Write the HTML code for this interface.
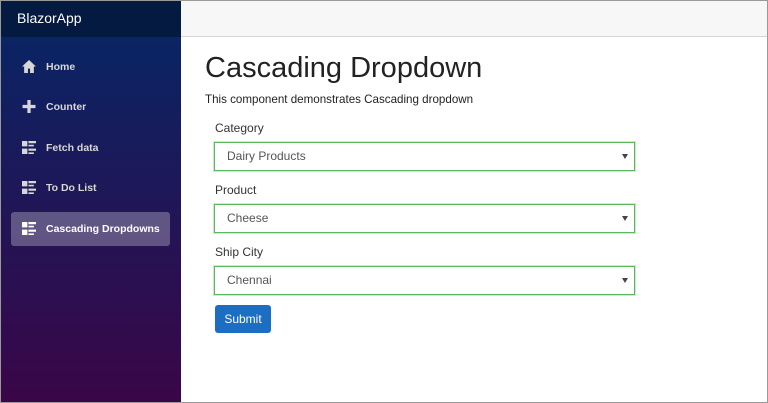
<!DOCTYPE html>
<html><head><style>
*{box-sizing:border-box;margin:0;padding:0}
body{width:768px;height:403px;overflow:hidden;font-family:"Liberation Sans",sans-serif;background:#fff;position:relative}
.frame{position:absolute;inset:0;border:1px solid #999;z-index:10;pointer-events:none}
.side{position:absolute;left:0;top:0;width:181px;height:403px;background:linear-gradient(180deg,#052767 0%,#3a0647 100%)}
.brand{height:37px;background:#041a40;color:#fff;font-size:14px;line-height:36px;padding-left:17px}
.nav{position:absolute;left:11px;width:159px;height:34px;color:#d7d7d7;font-size:10.5px;font-weight:bold;line-height:34px;padding-left:35px;border-radius:3px}
.nav.active{background:rgba(255,255,255,0.28);color:#fff}
.ic{position:absolute;left:11px;top:10px;width:14px;height:13px}
.top{position:absolute;left:181px;top:0;right:0;height:37px;background:#f7f7f7;border-bottom:1px solid #d6d5d5}
h1{position:absolute;left:205px;top:52px;font-size:29px;font-weight:normal;color:#222}
.sub{position:absolute;left:205px;top:93px;font-size:11.6px;color:#222}
.lbl{position:absolute;left:215px;font-size:12px;color:#333}
.sel{position:absolute;left:214px;width:421px;height:29px;border:1px solid #5cb85c;box-shadow:0 0 0 1px rgba(92,184,92,.3);font-size:12px;color:#555;line-height:27px;padding-left:12px}
.sel:after{content:"";position:absolute;right:6px;top:11px;border-left:3px solid transparent;border-right:3px solid transparent;border-top:5px solid #444}
.btn{position:absolute;left:215px;top:305px;width:56px;height:28px;background:#1b6ec2;border-radius:3px;color:#fff;font-size:12px;line-height:28px;text-align:center}
</style></head><body>
<div class="side">
<div class="brand">BlazorApp</div>
<div class="nav" style="top:50px"><svg class="ic" viewBox="0 0 13 12"><path d="M6.5 0L0 6h2v6h3.5V8h2v4H11V6h2z" fill="#d7d7d7"/></svg>Home</div>
<div class="nav" style="top:90px"><svg class="ic" viewBox="0 0 13 12"><path d="M5 0h3v4.5h4.5v3H8V12H5V7.5H.5v-3H5z" fill="#d7d7d7"/></svg>Counter</div>
<div class="nav" style="top:131px"><svg class="ic" viewBox="0 0 13 12"><path d="M0 0h5v5H0zM0 7h5v5H0zM6 0h7v2H6zM6 3.5h5v1.5H6zM6 7h7v2H6zM6 10.5h5V12H6z" fill="#d7d7d7"/></svg>Fetch data</div>
<div class="nav" style="top:171px"><svg class="ic" viewBox="0 0 13 12"><path d="M0 0h5v5H0zM0 7h5v5H0zM6 0h7v2H6zM6 3.5h5v1.5H6zM6 7h7v2H6zM6 10.5h5V12H6z" fill="#d7d7d7"/></svg>To Do List</div>
<div class="nav active" style="top:212px"><svg class="ic" viewBox="0 0 13 12"><path d="M0 0h5v5H0zM0 7h5v5H0zM6 0h7v2H6zM6 3.5h5v1.5H6zM6 7h7v2H6zM6 10.5h5V12H6z" fill="#fff"/></svg>Cascading Dropdowns</div>
</div>
<div class="top"></div>
<h1>Cascading Dropdown</h1>
<div class="sub">This component demonstrates Cascading dropdown</div>
<div class="lbl" style="top:121px">Category</div>
<div class="sel" style="top:142px">Dairy Products</div>
<div class="lbl" style="top:183px">Product</div>
<div class="sel" style="top:204px">Cheese</div>
<div class="lbl" style="top:245px">Ship City</div>
<div class="sel" style="top:266px">Chennai</div>
<div class="btn">Submit</div>
<div class="frame"></div>
</body></html>
